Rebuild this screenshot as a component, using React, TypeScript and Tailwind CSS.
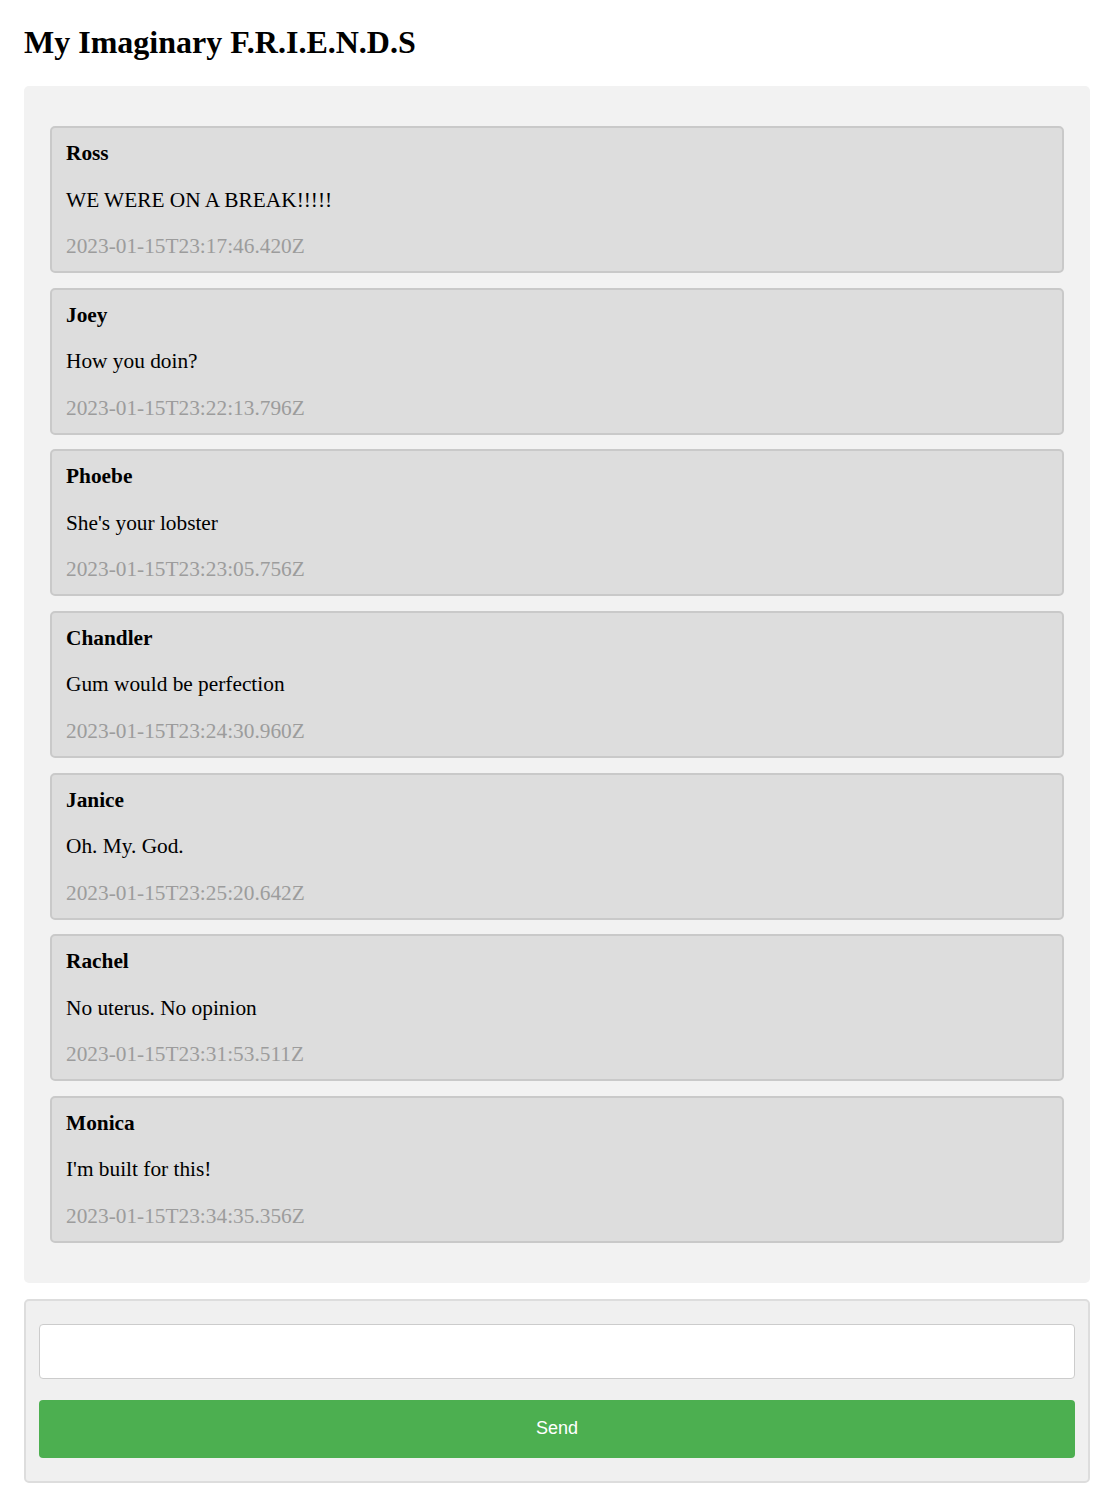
const messages = [
  { name: 'Ross', text: 'WE WERE ON A BREAK!!!!!', time: '2023-01-15T23:17:46.420Z' },
  { name: 'Joey', text: 'How you doin?', time: '2023-01-15T23:22:13.796Z' },
  { name: 'Phoebe', text: "She's your lobster", time: '2023-01-15T23:23:05.756Z' },
  { name: 'Chandler', text: 'Gum would be perfection', time: '2023-01-15T23:24:30.960Z' },
  { name: 'Janice', text: 'Oh. My. God.', time: '2023-01-15T23:25:20.642Z' },
  { name: 'Rachel', text: 'No uterus. No opinion', time: '2023-01-15T23:31:53.511Z' },
  { name: 'Monica', text: "I'm built for this!", time: '2023-01-15T23:34:35.356Z' },
];

export default function App() {
  return (
    <div className="min-h-screen bg-white px-6 pb-5 font-['Liberation_Serif',serif] text-black">
      <h1 className="pt-[24px] pb-[26px] text-[32px] font-bold leading-[36px]">
        My Imaginary F.R.I.E.N.D.S
      </h1>

      {/* Message list */}
      <div className="flex flex-col gap-[14.67px] rounded-[5px] bg-[#f2f2f2] px-[26px] py-[40px]">
        {messages.map((m) => (
          <div
            key={m.time}
            className="flex flex-col gap-[18.5px] rounded-[5px] border-2 border-[#c9c9c9] bg-[#dddddd] px-[14px] py-[11px] text-[21.33px] leading-[28px]"
          >
            <p className="font-bold">{m.name}</p>
            <p>{m.text}</p>
            <p className="text-[#9c9c9c]">{m.time}</p>
          </div>
        ))}
      </div>

      {/* Form */}
      <form
        className="mt-[16px] flex flex-col gap-[21px] rounded-[5px] border-2 border-[#dddddd] bg-[#f0f0f0] px-[13px] py-[23px]"
        onSubmit={(e) => e.preventDefault()}
      >
        <input
          type="text"
          className="h-[55px] w-full rounded-[4px] border border-[#cccccc] bg-white px-3 text-[18px] outline-none"
        />
        <button
          type="submit"
          className="h-[58px] w-full rounded-[4px] bg-[#4caf50] font-['Liberation_Sans',sans-serif] text-[18px] text-white"
        >
          Send
        </button>
      </form>
    </div>
  );
}
